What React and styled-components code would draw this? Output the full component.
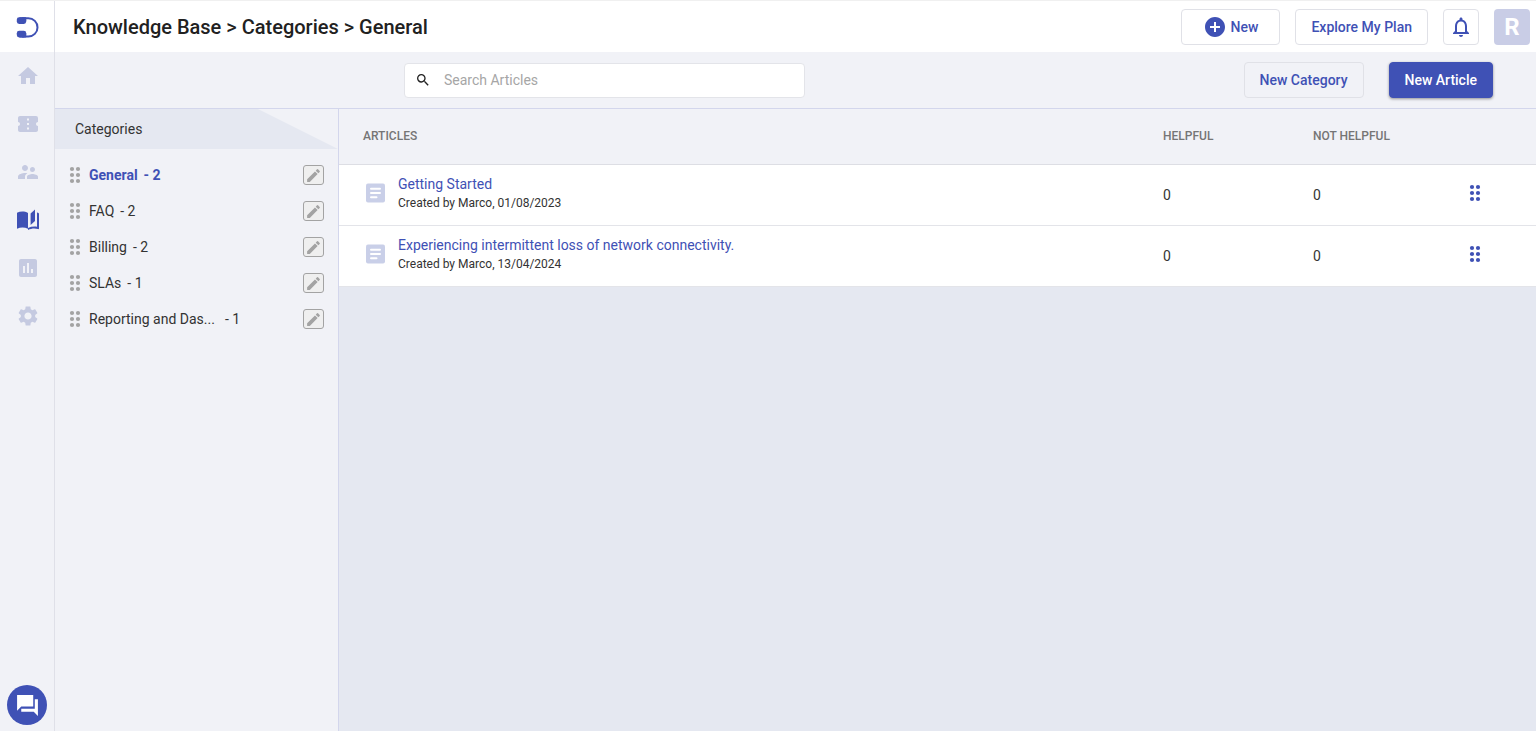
import { useState } from 'react';
import styled, { createGlobalStyle } from 'styled-components';
import {
  MdAddCircle,
  MdConfirmationNumber,
  MdCreate,
  MdHome,
  MdInsertChart,
  MdNotificationsNone,
  MdSearch,
  MdSettings,
  MdSupervisorAccount,
} from 'react-icons/md';

const MAX_NAME_LENGTH = 17;

const categories = [
  { id: 1, name: 'General', count: 2 },
  { id: 2, name: 'FAQ', count: 2 },
  { id: 3, name: 'Billing', count: 2 },
  { id: 4, name: 'SLAs', count: 1 },
  { id: 5, name: 'Reporting and Dashboards', count: 1 },
];

const articles = [
  {
    id: 1,
    title: 'Getting Started',
    author: 'Marco',
    date: '01/08/2023',
    helpful: 0,
    notHelpful: 0,
  },
  {
    id: 2,
    title: 'Experiencing intermittent loss of network connectivity.',
    author: 'Marco',
    date: '13/04/2024',
    helpful: 0,
    notHelpful: 0,
  },
];

const LogoIcon = () => (
  <svg width="24" height="24" viewBox="0 0 24 24" fill="none">
    <path
      d="M4.500 3.200H13.300A9.200 9.200 0 0 1 13.300 21.600H4.500"
      stroke="currentColor"
      strokeWidth="2"
    />
    <rect x="1.800" y="2.300" width="9.400" height="6.700" rx="2.400" fill="currentColor" />
    <rect x="1.800" y="15.800" width="9.400" height="6.700" rx="2.400" fill="currentColor" />
    <path
      d="M7 2.300H11.200V6H7zM7 18.500H11.200V22.500H7z"
      fill="currentColor"
    />
  </svg>
);

const BookIcon = () => (
  <svg width="24" height="24" viewBox="0 0 24 24" fill="currentColor">
    <path d="M1 4.800C4.400 3.200 8.600 3.200 12 5V20.800C8.600 19.200 4.400 19.200 1 20.800z" />
    <path d="M19 1.500L14.600 5.600V17L19 13z" />
    <path d="M21 4.600V18.800C18.200 18.200 15 18.600 12 20V22C15.200 20.400 19 20 21.800 21.100C22.600 21.300 23 21 23 20.500V5.400C22.400 5 21.700 4.800 21 4.600z" />
  </svg>
);

const ChatIcon = () => (
  <svg width="25" height="25" viewBox="0 0 24 24" fill="currentColor">
    <path d="M22 6h-3v9H6v3h12l4 4V6zM17.500 13V2H2v15l4-4h11.500z" />
  </svg>
);

const DocIcon = () => (
  <svg width="24" height="24" viewBox="0 0 24 24">
    <rect x="3" y="2.500" width="19" height="19" rx="2" fill="#c9cfe8" />
    <path
      d="M8 7.700H17M8 12H17M8 16.300H13.500"
      stroke="#fff"
      strokeWidth="2"
      strokeLinecap="round"
    />
  </svg>
);

const DotsIcon = () => (
  <svg width="24" height="24" viewBox="0 0 24 24" fill="currentColor">
    {[6, 12, 18].map((y) => (
      <g key={y}>
        <circle cx="9" cy={y} r="2.100" />
        <circle cx="15" cy={y} r="2.100" />
      </g>
    ))}
  </svg>
);

const navItems = [
  { label: 'Home', icon: <MdHome size={24} /> },
  { label: 'Tickets', icon: <MdConfirmationNumber size={24} /> },
  { label: 'Contacts', icon: <MdSupervisorAccount size={24} /> },
  { label: 'Knowledge Base', icon: <BookIcon />, active: true },
  { label: 'Reports', icon: <MdInsertChart size={24} /> },
  { label: 'Settings', icon: <MdSettings size={24} /> },
];

const isLong = (name) => name.length > MAX_NAME_LENGTH;

const shorten = (name) =>
  isLong(name) ? `${name.slice(0, MAX_NAME_LENGTH)}...` : name;

const App = () => {
  const [search, setSearch] = useState('');
  const [selectedId, setSelectedId] = useState(1);

  const onSearchChange = (event) => {
    setSearch(event.target.value);
  };

  const filtered = articles.filter((article) =>
    article.title.toLowerCase().includes(search.toLowerCase()),
  );

  return (
    <>
      <GlobalStyle />
      <Layout>
        <Sidebar>
          <Logo href="#" aria-label="Dashboard">
            <LogoIcon />
          </Logo>
          <Nav>
            {navItems.map(({ label, icon, active }) => (
              <NavLink key={label} href="#" aria-label={label} $active={active}>
                {icon}
              </NavLink>
            ))}
          </Nav>
          <ChatButton type="button" aria-label="Chat">
            <ChatIcon />
          </ChatButton>
        </Sidebar>
        <Page>
          <Header>
            <Title>Knowledge Base &gt; Categories &gt; General</Title>
            <HeaderActions>
              <Button type="button" $wide>
                <MdAddCircle size={24} />
                New
              </Button>
              <Button type="button">Explore My Plan</Button>
              <IconButton type="button" aria-label="Notifications">
                <MdNotificationsNone size={24} />
              </IconButton>
              <Avatar type="button">R</Avatar>
            </HeaderActions>
          </Header>
          <Toolbar>
            <SearchBox>
              <MdSearch size={16} />
              <SearchInput
                type="text"
                placeholder="Search Articles"
                aria-label="Search Articles"
                value={search}
                onChange={onSearchChange}
              />
            </SearchBox>
            <ToolbarActions>
              <Button type="button">New Category</Button>
              <PrimaryButton type="button">New Article</PrimaryButton>
            </ToolbarActions>
          </Toolbar>
          <Content>
            <CategoryPanel>
              <PanelTitle>Categories</PanelTitle>
              <CategoryList>
                {categories.map(({ id, name, count }) => (
                  <CategoryItem key={id}>
                    <DragHandle>
                      <DotsIcon />
                    </DragHandle>
                    <CategoryButton
                      type="button"
                      $active={id === selectedId}
                      onClick={() => setSelectedId(id)}
                    >
                      <CategoryName $long={isLong(name)}>
                        {shorten(name)}
                      </CategoryName>
                      <span>- {count}</span>
                    </CategoryButton>
                    <EditButton type="button" aria-label={`Edit ${name}`}>
                      <MdCreate size={17} />
                    </EditButton>
                  </CategoryItem>
                ))}
              </CategoryList>
            </CategoryPanel>
            <Articles>
              <Table>
                <thead>
                  <tr>
                    <HeadCell>ARTICLES</HeadCell>
                    <HeadCell $width="150px">HELPFUL</HeadCell>
                    <HeadCell $width="150px">NOT HELPFUL</HeadCell>
                    <HeadCell $width="97px" aria-label="Actions" />
                  </tr>
                </thead>
                <tbody>
                  {filtered.map((article) => (
                    <tr key={article.id}>
                      <Cell $raised>
                        <ArticleInfo>
                          <DocIcon />
                          <div>
                            <ArticleLink href="#">{article.title}</ArticleLink>
                            <Meta>
                              Created by {article.author}, {article.date}
                            </Meta>
                          </div>
                        </ArticleInfo>
                      </Cell>
                      <Cell>{article.helpful}</Cell>
                      <Cell>{article.notHelpful}</Cell>
                      <Cell $raised>
                        <MenuButton type="button" aria-label="Article actions">
                          <DotsIcon />
                        </MenuButton>
                      </Cell>
                    </tr>
                  ))}
                </tbody>
              </Table>
            </Articles>
          </Content>
        </Page>
      </Layout>
    </>
  );
};

export default App;

const GlobalStyle = createGlobalStyle`
  * {
    box-sizing: border-box;
  }
  body {
    margin: 0;
    font-family: Roboto, 'Liberation Sans', sans-serif;
    font-size: 14px;
    color: #333;
    background-color: #f1f2f7;
  }
  button,
  input {
    font: inherit;
    margin: 0;
  }
  button {
    cursor: pointer;
  }
  a {
    text-decoration: none;
  }
  svg {
    display: block;
    flex-shrink: 0;
  }
`;

const Layout = styled.div`
  display: flex;
  min-height: 100vh;
  border-top: solid 1px #f0f0f0;
`;

const Sidebar = styled.aside`
  display: flex;
  flex-direction: column;
  width: 55px;
  flex-shrink: 0;
  border-right: solid 1px #dfe0e8;
`;

const Logo = styled.a`
  display: flex;
  align-items: center;
  justify-content: center;
  height: 51px;
  background-color: #fff;
  color: #3f51b5;
`;

const Nav = styled.nav`
  display: flex;
  flex-direction: column;
  gap: 24px;
  padding: 12px 0 0 16px;
`;

const NavLink = styled.a`
  width: 24px;
  height: 24px;
  color: ${({ $active }) => ($active ? '#3f51b5' : '#c5cae1')};
`;

const ChatButton = styled.button`
  display: flex;
  align-items: center;
  justify-content: center;
  align-self: center;
  width: 40px;
  height: 40px;
  margin: auto 0 6px;
  padding: 0;
  border: none;
  border-radius: 50%;
  color: #fff;
  background-color: #3f51b5;
`;

const Page = styled.div`
  display: flex;
  flex-direction: column;
  flex: 1;
  min-width: 0;
`;

const Header = styled.header`
  display: flex;
  align-items: center;
  justify-content: space-between;
  height: 51px;
  padding: 0 6px 0 18px;
  background-color: #fff;
`;

const Title = styled.h1`
  margin: 0;
  font-size: 20px;
  font-weight: 500;
  color: #212121;
`;

const HeaderActions = styled.div`
  display: flex;
  align-items: center;
  gap: 15px;
`;

const Button = styled.button`
  display: flex;
  align-items: center;
  justify-content: center;
  gap: 4px;
  height: 36px;
  padding: 0 ${({ $wide }) => ($wide ? '21px' : '15px')};
  border: solid 1px #e0e1e7;
  border-radius: 4px;
  font-weight: 500;
  color: #3f51b5;
  background-color: transparent;
`;

const IconButton = styled(Button)`
  width: 36px;
  padding: 0;
`;

const Avatar = styled.button`
  width: 36px;
  height: 36px;
  padding: 0;
  border: none;
  border-radius: 4px;
  font-size: 24px;
  font-weight: 700;
  color: #fff;
  background-color: #c9cde6;
`;

const Toolbar = styled.div`
  display: flex;
  align-items: center;
  justify-content: space-between;
  height: 57px;
  padding: 0 43px 0 349px;
  border-bottom: solid 1px #d3d6ec;
`;

const SearchBox = styled.label`
  display: flex;
  align-items: center;
  gap: 13px;
  width: 401px;
  height: 35px;
  padding: 0 10px;
  border: solid 1px #e3e4e9;
  border-radius: 4px;
  color: #222;
  background-color: #fff;
`;

const SearchInput = styled.input`
  flex: 1;
  min-width: 0;
  padding: 0;
  border: none;
  outline: none;
  color: #333;
  background-color: transparent;
  &::placeholder {
    color: #a6a6a6;
  }
`;

const ToolbarActions = styled.div`
  display: flex;
  gap: 25px;
`;

const PrimaryButton = styled(Button)`
  border-color: #3f51b5;
  color: #fff;
  background-color: #3f51b5;
  box-shadow: 0 1px 3px rgba(0, 0, 0, 0.4);
`;

const Content = styled.main`
  display: flex;
  flex: 1;
`;

const CategoryPanel = styled.section`
  width: 284px;
  flex-shrink: 0;
  border-right: solid 1px #d3d6ec;
`;

const PanelTitle = styled.h2`
  margin: 0;
  padding-left: 20px;
  font-size: 14px;
  font-weight: 400;
  line-height: 40px;
  background-color: #e5e8f1;
  clip-path: polygon(0 0, 203px 0, 100% 100%, 0 100%);
`;

const CategoryList = styled.ul`
  margin: 0;
  padding: 8px 14px 0 8px;
  list-style: none;
`;

const CategoryItem = styled.li`
  display: flex;
  align-items: center;
  height: 36px;
`;

const DragHandle = styled.span`
  color: #a3a3a3;
  cursor: grab;
`;

const CategoryButton = styled.button`
  display: flex;
  flex: 1;
  gap: 6px;
  padding: 0 0 0 2px;
  border: none;
  text-align: left;
  font-weight: ${({ $active }) => ($active ? 700 : 400)};
  color: ${({ $active }) => ($active ? '#3f51b5' : '#333')};
  background-color: transparent;
`;

const CategoryName = styled.span`
  min-width: ${({ $long }) => ($long ? '130px' : '0')};
  white-space: nowrap;
`;

const EditButton = styled.button`
  display: flex;
  align-items: center;
  justify-content: center;
  width: 21px;
  height: 20px;
  padding: 0;
  border: solid 1px #a3a3a3;
  border-radius: 3px;
  color: #a3a3a3;
  background-color: #efefef;
`;

const Articles = styled.section`
  flex: 1;
  min-width: 0;
  background-color: #e5e8f1;
`;

const Table = styled.table`
  width: 100%;
  table-layout: fixed;
  border-spacing: 0;
`;

const HeadCell = styled.th`
  width: ${({ $width }) => $width || 'auto'};
  height: 56px;
  padding: 0 0 2px 24px;
  border-bottom: solid 1px #dddee4;
  text-align: left;
  font-size: 12px;
  font-weight: 500;
  color: #757575;
  background-color: #f1f2f7;
`;

const Cell = styled.td`
  height: 61px;
  padding: 0 0 ${({ $raised }) => ($raised ? '4px' : '0')} 24px;
  border-bottom: solid 1px #e3e4e9;
  background-color: #fff;
`;

const ArticleInfo = styled.div`
  display: flex;
  gap: 11px;
  align-items: center;
`;

const ArticleLink = styled.a`
  display: block;
  line-height: 20px;
  color: #3f51b5;
`;

const Meta = styled.div`
  font-size: 12px;
  line-height: 18px;
`;

const MenuButton = styled.button`
  display: block;
  padding: 0;
  border: none;
  color: #3f51b5;
  background-color: transparent;
`;
